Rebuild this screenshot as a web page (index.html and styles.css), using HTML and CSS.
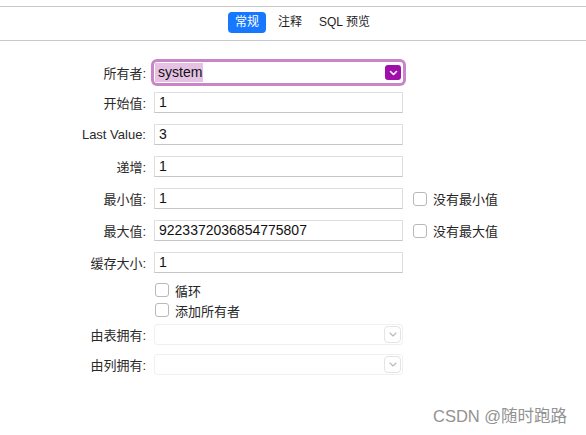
FILE: index.html
```html
<!DOCTYPE html>
<html lang="zh">
<head>
<meta charset="utf-8">
<link rel="stylesheet" href="styles.css">
</head>
<body>
<div class="page">
  <div class="topgap"></div>
  <div class="tabbar">
    <span class="tab active">常规</span>
    <span class="tab">注释</span>
    <span class="tab">SQL 预览</span>
  </div>
  <div class="form">
    <div class="row owner-row">
      <label class="lbl">所有者:</label>
      <div class="owner">
        <span class="sel-text">system</span>
        <span class="owner-btn">
          <svg width="9" height="6" viewBox="0 0 9 6"><path d="M1.5 1.5 L4.5 4.5 L7.5 1.5" fill="none" stroke="#fff" stroke-width="1.6" stroke-linecap="round" stroke-linejoin="round"/></svg>
        </span>
      </div>
    </div>
    <div class="row">
      <label class="lbl">开始值:</label>
      <div class="field">1</div>
    </div>
    <div class="row">
      <label class="lbl">Last Value:</label>
      <div class="field">3</div>
    </div>
    <div class="row">
      <label class="lbl">递增:</label>
      <div class="field">1</div>
    </div>
    <div class="row">
      <label class="lbl">最小值:</label>
      <div class="field">1</div>
      <div class="extra"><span class="cb"></span><span class="cb-text">没有最小值</span></div>
    </div>
    <div class="row">
      <label class="lbl">最大值:</label>
      <div class="field">9223372036854775807</div>
      <div class="extra"><span class="cb"></span><span class="cb-text">没有最大值</span></div>
    </div>
    <div class="row">
      <label class="lbl">缓存大小:</label>
      <div class="field">1</div>
    </div>
    <div class="row check-row first-check">
      <span class="lbl"></span>
      <div class="check"><span class="cb"></span><span class="cb-text">循环</span></div>
    </div>
    <div class="row check-row">
      <span class="lbl"></span>
      <div class="check"><span class="cb"></span><span class="cb-text">添加所有者</span></div>
    </div>
    <div class="row sel-row first-sel">
      <label class="lbl">由表拥有:</label>
      <div class="dis-select">
        <span class="dis-btn"><svg width="8" height="5" viewBox="0 0 8 5"><path d="M1 1 L4 4 L7 1" fill="none" stroke="#b8b8b8" stroke-width="1.1" stroke-linecap="round" stroke-linejoin="round"/></svg></span>
      </div>
    </div>
    <div class="row sel-row">
      <label class="lbl">由列拥有:</label>
      <div class="dis-select">
        <span class="dis-btn"><svg width="8" height="5" viewBox="0 0 8 5"><path d="M1 1 L4 4 L7 1" fill="none" stroke="#b8b8b8" stroke-width="1.1" stroke-linecap="round" stroke-linejoin="round"/></svg></span>
      </div>
    </div>
  </div>
  <div class="watermark">CSDN @随时跑路</div>
</div>
</body>
</html>
```

FILE: styles.css
```css
* { box-sizing: border-box; }
html, body { margin: 0; padding: 0; background: #fff; }
body {
  font-family: "Liberation Sans", "Noto Sans CJK SC", sans-serif;
  color: #262626;
  width: 586px;
  height: 435px;
  overflow: hidden;
}
.page { position: relative; width: 586px; height: 435px; }
.topgap { height: 6px; }
.tabbar {
  height: 35px;
  border-top: 1px solid #c8c8c8;
  border-bottom: 1px solid #c8c8c8;
  display: flex;
  justify-content: flex-start;
  align-items: flex-start;
  padding-left: 228px;
  padding-top: 5px;
}
.tab {
  font-size: 12px;
  height: 21px;
  line-height: 21px;
  padding: 0 7px;
  color: #1e1e1e;
  margin-right: 3px;
  border-radius: 4px;
}
.tab.active {
  background: #1677ff;
  color: #fff;
  width: 38px;
  padding: 0;
  text-align: center;
  margin-right: 5px;
}
.form {
  display: flex;
  flex-direction: column;
  padding-top: 21px;
}
.row {
  display: flex;
  align-items: center;
  height: 21px;
  margin-bottom: 11px;
}
.owner-row { margin-bottom: 9px; }
.lbl {
  width: 146px;
  text-align: right;
  font-size: 13px;
  margin-right: 8px;
  flex-shrink: 0;
  color: #2a2a2a;
}
.field {
  width: 249px;
  height: 21px;
  border: 1px solid #dedede;
  border-bottom-color: #c6c6c6;
  font-size: 14px;
  line-height: 19px;
  padding-left: 4px;
  color: #111;
  background: #fff;
}
.owner {
  width: 249px;
  height: 21px;
  border-radius: 3px;
  box-shadow: 0 0 0 3px #c985c6;
  background: #fff;
  display: flex;
  align-items: center;
  justify-content: space-between;
  padding-left: 1px;
  padding-right: 2px;
}
.sel-text {
  background: #e5c2e3;
  font-size: 14px;
  color: #111;
  height: 19px;
  line-height: 19px;
  padding: 0 1px 0 3px;
}
.owner-btn {
  width: 16px;
  height: 15px;
  background: #a10fab;
  border-radius: 3px;
  display: flex;
  align-items: center;
  justify-content: center;
}
.extra {
  display: flex;
  align-items: center;
  margin-left: 10px;
}
.cb {
  width: 14px;
  height: 14px;
  border: 1px solid #b9b9b9;
  border-radius: 3px;
  background: #fff;
  flex-shrink: 0;
}
.cb-text {
  font-size: 13px;
  margin-left: 6px;
  color: #262626;
}
.check { display: flex; align-items: center; padding-left: 1px; }
.check-row { height: 20px; margin-bottom: 0; }
.first-check { margin-top: -4px; }
.first-sel { margin-top: 4px; }
.sel-row { margin-bottom: 9px; }
.dis-select {
  width: 249px;
  height: 21px;
  border: 1px solid #f0f0f0;
  border-radius: 3px;
  display: flex;
  align-items: center;
  justify-content: flex-end;
  padding-right: 1px;
}
.dis-btn {
  width: 17px;
  height: 17px;
  border: 1px solid #e4e4e4;
  border-radius: 4px;
  display: flex;
  align-items: center;
  justify-content: center;
  background: #fff;
}
.watermark {
  position: absolute;
  left: 433px;
  top: 403px;
  font-size: 16.5px;
  color: #929292;
  text-shadow: 0 0 1px #fff;
}
```
